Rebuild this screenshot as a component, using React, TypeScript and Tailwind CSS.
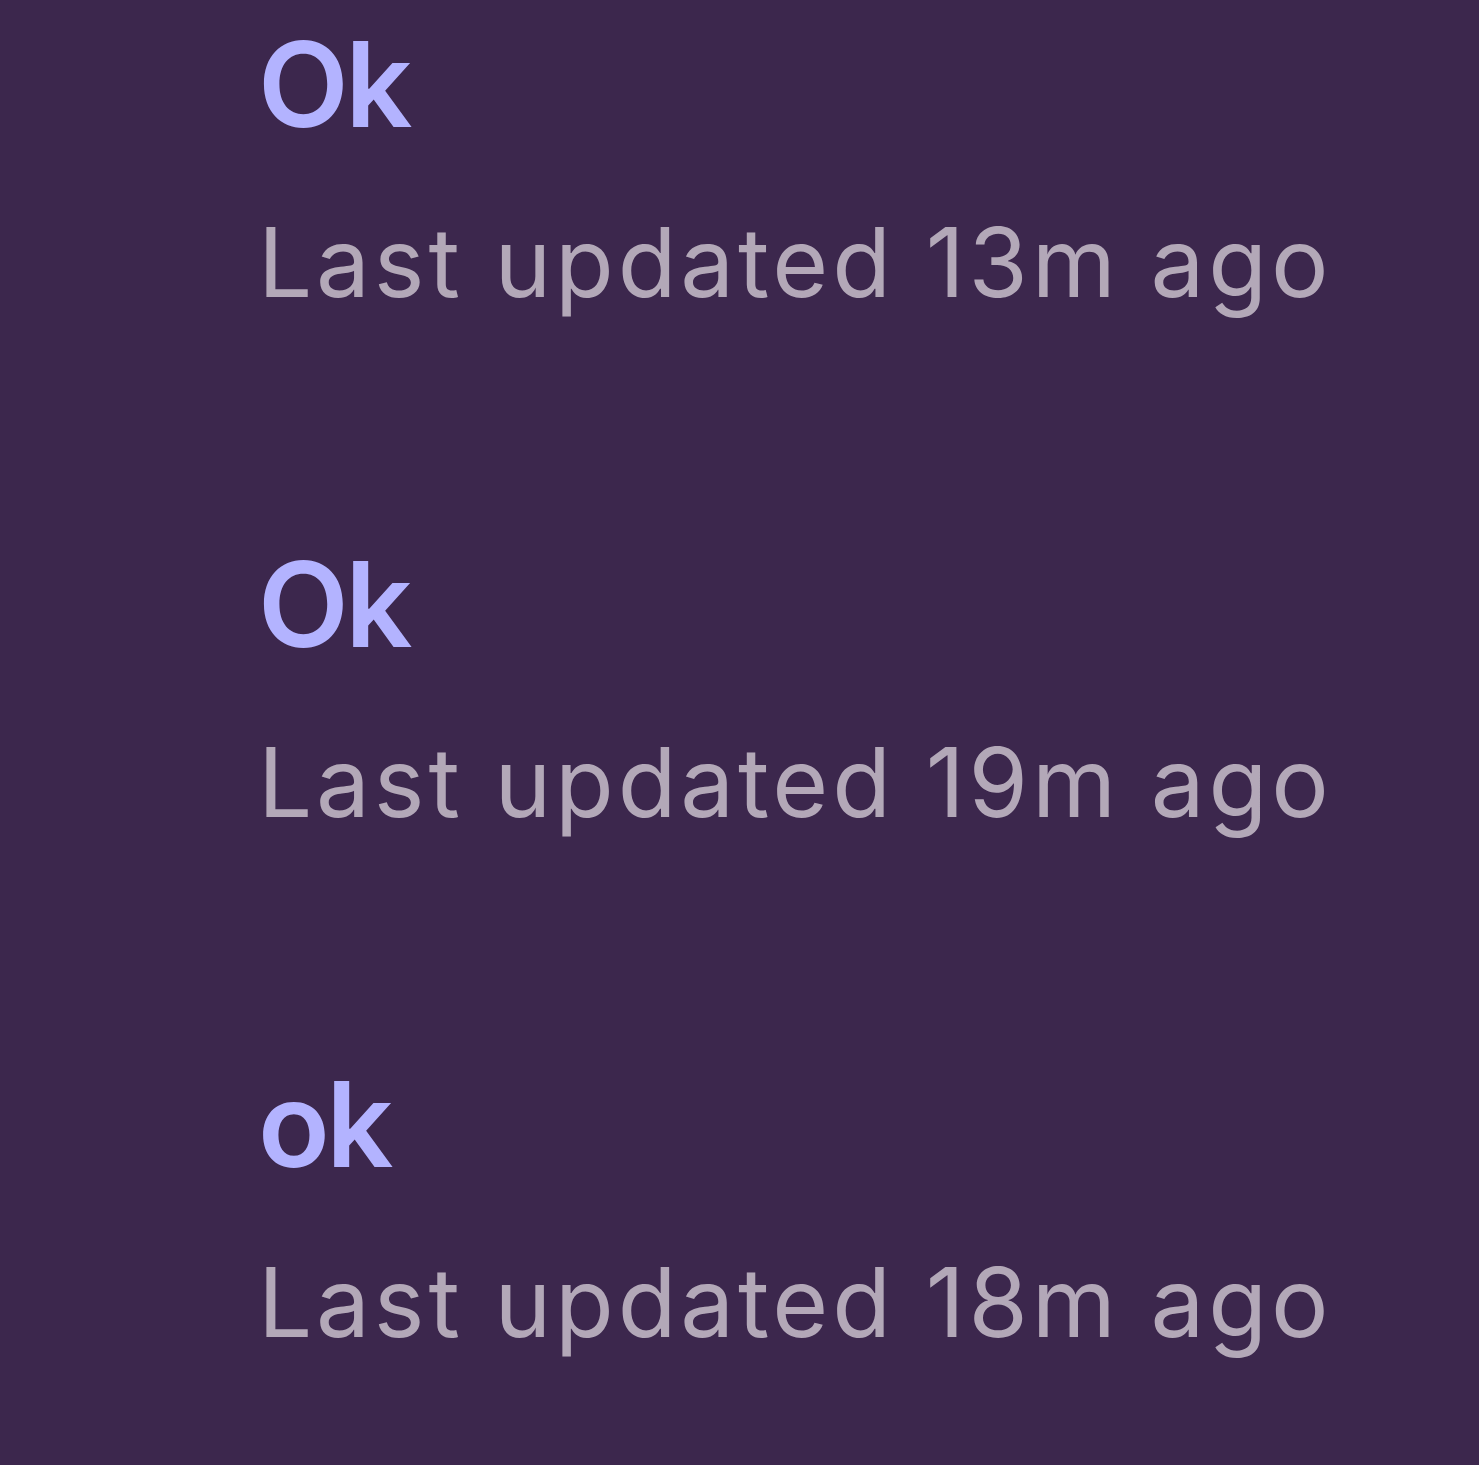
const items = [
  { title: "Ok", time: "13m" },
  { title: "Ok", time: "19m" },
  { title: "ok", time: "18m" },
];

export default function App() {
  return (
    <div className="min-h-[1465px] w-full bg-[#3c274d] pl-[258px] pt-[13px] font-['Inter','Noto_Sans',sans-serif]">
      <div className="flex flex-col gap-[213px]">
        {items.map((item, i) => (
          <div key={i} className="flex flex-col">
            <div className="text-[118px] leading-[142px] font-semibold tracking-[-0.03em] text-[#b3b3ff]">
              {item.title}
            </div>
            <div className="mt-[49px] text-[96px] leading-[116px] tracking-[0.04em] text-[#b3a8b8]">
              Last updated {item.time} ago
            </div>
          </div>
        ))}
      </div>
    </div>
  );
}
